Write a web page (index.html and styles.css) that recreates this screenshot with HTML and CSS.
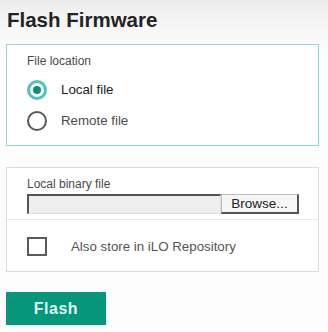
FILE: index.html
```html
<!DOCTYPE html>
<html>
<head>
<meta charset="utf-8">
<link rel="stylesheet" href="styles.css">
</head>
<body>
<div class="page">
  <h1 class="title">Flash Firmware</h1>
  <div class="box box-location">
    <div class="label">File location</div>
    <div class="radio-row">
      <span class="radio checked"><span class="dot"></span></span>
      <span class="radio-text">Local file</span>
    </div>
    <div class="radio-row">
      <span class="radio"></span>
      <span class="radio-text muted">Remote file</span>
    </div>
  </div>
  <div class="box box-file">
    <div class="file-section">
      <div class="label">Local binary file</div>
      <div class="file-row">
        <span class="file-input"></span>
        <span class="browse">Browse...</span>
      </div>
    </div>
    <div class="check-section">
      <span class="checkbox"></span>
      <span class="check-text">Also store in iLO Repository</span>
    </div>
  </div>
  <div class="actions">
    <button class="flash">Flash</button>
  </div>
</div>
</body>
</html>
```
FILE: styles.css
```css
html, body {
  margin: 0;
  padding: 0;
}
body {
  width: 328px;
  height: 332px;
  overflow: hidden;
  background: linear-gradient(#ececec 0px, #f8f8f8 30px, #fdfdfd 60px, #fdfdfd 100%);
  font-family: "Liberation Sans", Arial, sans-serif;
}
.page {
  padding: 0 9px 0 6px;
}
.title {
  margin: 0;
  padding: 8px 0 0 1px;
  height: 35px;
  box-sizing: border-box;
  font-size: 20.5px;
  line-height: 24px;
  font-weight: bold;
  color: #242424;
}
.box {
  background: #fff;
  box-sizing: border-box;
}
.box-location {
  margin-top: 9px;
  height: 102px;
  border: 1px solid #92d5d8;
  padding: 9px 0 0 20px;
}
.label {
  font-size: 12px;
  line-height: 14px;
  color: #4a4a4a;
}
.radio-row {
  display: flex;
  align-items: center;
  height: 31px;
}
.box-location .label {
  margin-bottom: 6px;
}
.radio {
  width: 20px;
  height: 20px;
  box-sizing: border-box;
  border-radius: 50%;
  border: 2px solid #585858;
  display: flex;
  align-items: center;
  justify-content: center;
  flex: none;
}
.radio.checked {
  border: 3px solid #4fc1c0;
}
.dot {
  width: 8px;
  height: 8px;
  border-radius: 50%;
  background: #0f8f78;
}
.radio-text {
  margin-left: 14px;
  font-size: 13.3px;
  color: #222;
}
.radio-text.muted {
  color: #4a4a4a;
}
.box-file {
  margin-top: 21px;
  height: 105px;
  border: 1px solid #dcdcdc;
}
.file-section {
  height: 52px;
  box-sizing: border-box;
  padding: 9px 0 0 20px;
  border-bottom: 1px solid #e6e6e6;
}
.file-section .label {
  margin-bottom: 3px;
}
.file-row {
  display: flex;
  height: 20px;
}
.file-input {
  width: 194px;
  height: 20px;
  box-sizing: border-box;
  border-top: 2px solid #555;
  border-left: 2px solid #555;
  border-bottom: 1px solid #ddd;
  border-right: 1px solid #ddd;
  background: #efefef;
}
.browse {
  width: 78px;
  height: 20px;
  box-sizing: border-box;
  border: 1px solid #bbb;
  border-bottom: 2px solid #555;
  border-right: 2px solid #555;
  background: #f6f6f6;
  font-size: 13.5px;
  line-height: 17px;
  text-align: center;
  color: #222;
}
.check-section {
  display: flex;
  align-items: center;
  height: 52px;
  padding-left: 20px;
}
.checkbox {
  width: 20px;
  height: 19px;
  box-sizing: border-box;
  border: 2px solid #5a5a5a;
  background: #fff;
  flex: none;
}
.check-text {
  margin-left: 24px;
  font-size: 13.3px;
  color: #555;
}
.actions {
  margin-top: 20px;
}
.flash {
  width: 100px;
  height: 33px;
  border: none;
  background: #05967b;
  color: #dcf7f1;
  font-family: "Liberation Sans", Arial, sans-serif;
  font-weight: bold;
  font-size: 16px;
  letter-spacing: 0.5px;
  padding: 0;
}
```
